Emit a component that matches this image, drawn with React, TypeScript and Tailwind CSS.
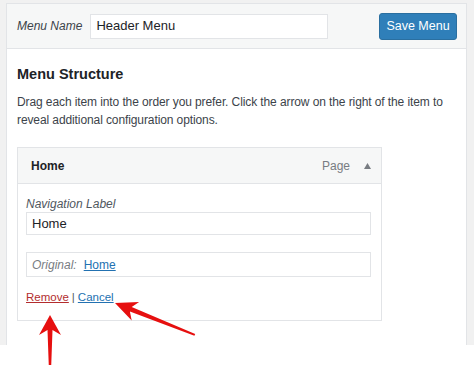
import React from 'react';

const Arrows: React.FC = () => (
  <svg className="pointer-events-none absolute left-0 top-0" width={474} height={365} viewBox="0 0 474 365">
    <polygon
      points="50,315 61,335 52.5,330 51.2,366 48.8,366 47.5,330 39,335"
      fill="#e60f0f"
    />
    <polygon
      points="115,303 131.7,320.5 129.9,311.6 194.4,335.8 195.2,334 131.7,307 139.1,301.9"
      fill="#e60f0f"
    />
  </svg>
);

const App: React.FC = () => {
  return (
    <div className="relative h-[365px] w-[474px] overflow-hidden bg-white font-['Liberation_Sans',Arial,sans-serif] text-[12px] text-[#1d2327]">
      <div className="flex h-[345px] flex-col bg-[#f1f1f1] pl-[6px] pr-[7px] pt-[3px]">
        <div className="flex flex-1 flex-col border-x border-t border-[#e2e4e7] bg-white">
          <div className="flex h-[45px] items-center border-b border-[#e2e4e7] bg-[#f6f7f7] pl-[10px] pr-[9px]">
            <span className="text-[12px] italic text-[#3c434a]">Menu Name</span>
            <div className="ml-[8px] flex h-[25px] w-[238px] items-center border border-[#e2e4e7] bg-white px-[5px] text-[13px] text-[#1d2327]">
              Header Menu
            </div>
            <button className="ml-auto h-[27px] w-[78px] rounded-[3px] border border-[#2a6fa0] bg-[#2f7fb9] text-[12.5px] text-white">
              Save Menu
            </button>
          </div>

          <div className="pl-[10px] pr-[4px] pt-[15px]">
            <h2 className="text-[14.5px] font-semibold leading-[20px] text-[#1d2327]">Menu Structure</h2>
            <p className="mt-[9px] text-[12px] leading-[18px] tracking-[-0.1px] text-[#3c434a]">
              Drag each item into the order you prefer. Click the arrow on the right of the item to reveal additional
              configuration options.
            </p>

            <div className="mt-[18px] w-[365px] border border-[#e2e4e7] bg-white">
              <div className="flex h-[36px] items-center border-b border-[#e2e4e7] bg-[#f6f7f7] pl-[13px] pr-[10px]">
                <span className="font-semibold text-[#1d2327]">Home</span>
                <span className="ml-auto text-[#787c82]">Page</span>
                <svg className="ml-[14px]" width={7} height={6} viewBox="0 0 7 6">
                  <polygon points="3.5,0 7,6 0,6" fill="#787c82" />
                </svg>
              </div>
              <div className="pb-[14px] pl-[8px] pr-[10px] pt-[12px]">
                <div className="italic leading-[16px] text-[#50575e]">Navigation Label</div>
                <div className="flex h-[23px] items-center border border-[#e2e4e7] px-[5px] text-[13px] text-[#1d2327]">
                  Home
                </div>
                <div className="mt-[17px] flex h-[25px] items-center border border-[#e2e4e7] px-[5px]">
                  <span className="italic text-[#787c82]">Original:</span>
                  <a className="ml-[7px] text-[#2271b1] underline">Home</a>
                </div>
                <div className="mt-[11px] flex items-center text-[11.5px] leading-[18px]">
                  <a className="text-[#b32d2e] underline">Remove</a>
                  <span className="mx-[3px] text-[#50575e]">|</span>
                  <a className="text-[#2271b1] underline">Cancel</a>
                </div>
              </div>
            </div>
          </div>
        </div>
      </div>
      <Arrows />
    </div>
  );
};

export default App;
